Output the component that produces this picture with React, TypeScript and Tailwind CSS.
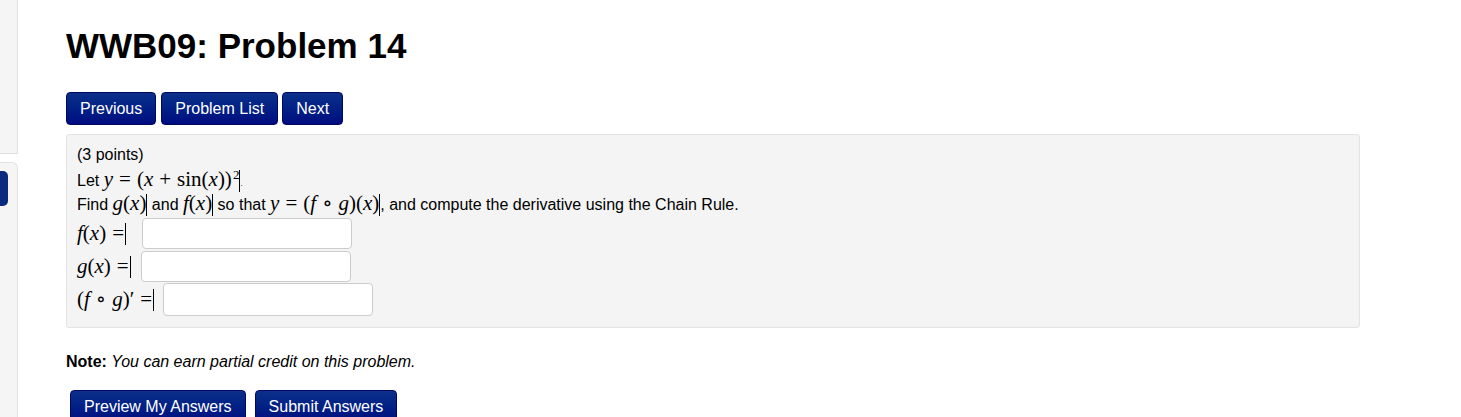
import React from "react";

const serif = { fontFamily: '"Liberation Serif", "DejaVu Serif", serif' };

function I({ children }: { children: React.ReactNode }) {
  return <span className="italic">{children}</span>;
}

function Op({ children }: { children: React.ReactNode }) {
  return <span className="mx-[6px]">{children}</span>;
}

function Eq() {
  return <span className="ml-[6px] mr-[1px]">=</span>;
}

function M({ children }: { children: React.ReactNode }) {
  return (
    <span className="text-[21px] leading-none whitespace-nowrap" style={serif}>
      {children}
    </span>
  );
}

function Bar() {
  return <span className="inline-block w-px h-[22px] bg-black align-[-6px]" />;
}

function NavBtn({ children }: { children: React.ReactNode }) {
  return (
    <button className="h-[33px] px-[13px] rounded-[4px] bg-gradient-to-b from-[#0c2f8a] to-[#000a80] text-white text-[16px] leading-none border border-[#00085e]">
      {children}
    </button>
  );
}

export default function App() {
  return (
    <div
      className="relative w-full h-[417px] bg-white overflow-hidden flex text-black"
      style={{ fontFamily: '"Liberation Sans", Arial, sans-serif' }}
    >
      <div className="w-[18px] shrink-0 flex flex-col">
        <div className="h-[154px] bg-[#f5f5f5] border-r border-b border-[#e0e0e0]" />
        <div className="mt-[8px] flex-1 bg-[#f5f5f5] border-r border-t border-[#e3e3e3] rounded-tr-[6px] pt-[8px]">
          <div className="w-[8px] h-[35px] bg-[#0a2a80] rounded-r-[5px]" />
        </div>
      </div>

      <div className="ml-[48px] w-[1294px] shrink-0">
        <h1 className="mt-[27px] text-[35px] leading-[38px] font-bold">WWB09: Problem 14</h1>

        <div className="mt-[27px] flex">
          <NavBtn>Previous</NavBtn>
          <div className="w-[5px]" />
          <NavBtn>Problem List</NavBtn>
          <div className="w-[4px]" />
          <NavBtn>Next</NavBtn>
        </div>

        <div className="mt-[9px] h-[194px] bg-[#f4f4f4] border border-[#e3e3e3] rounded-[3px] px-[10px] pt-[8px] text-[16px] leading-[24px]">
          <div className="h-[24px]">(3 points)</div>
          <div className="h-[24px] mt-[1px]">
            Let{" "}
            <M>
              <I>y</I>
              <Op>=</Op>(<I>x</I>
              <Op>+</Op>sin(<I>x</I>))
              <span className="inline-block text-[13px] leading-none align-[7px] ml-[1px]">2</span>
            </M>
            <Bar />
            <span className="text-[8px]">.</span>
          </div>
          <div className="h-[24px] mt-[1px]">
            Find{" "}
            <M>
              <I>g</I>(<I>x</I>)
            </M>
            <Bar /> and{" "}
            <M>
              <I>f</I>(<I>x</I>)
            </M>
            <Bar /> so that{" "}
            <M>
              <I>y</I>
              <Op>=</Op>(<I>f</I>
              <Op>∘</Op>
              <I>g</I>)(<I>x</I>)
            </M>
            <Bar />, and compute the derivative using the Chain Rule.
          </div>

          <div className="flex flex-col">
            <div className="flex items-center h-[33px]">
              <M>
                <I>f</I>(<I>x</I>)<Eq />
              </M>
              <Bar />
              <input className="ml-[16px] w-[210px] h-[31px] bg-white border border-[#cccccc] rounded-[4px]" />
            </div>
            <div className="flex items-center h-[33px]">
              <M>
                <I>g</I>(<I>x</I>)<Eq />
              </M>
              <Bar />
              <input className="ml-[10px] w-[210px] h-[31px] bg-white border border-[#cccccc] rounded-[4px]" />
            </div>
            <div className="flex items-center h-[33px]">
              <M>
                (<I>f</I>
                <Op>∘</Op>
                <I>g</I>)′<Eq />
              </M>
              <Bar />
              <input className="ml-[9px] w-[210px] h-[33px] bg-white border border-[#cccccc] rounded-[4px]" />
            </div>
          </div>
        </div>

        <div className="mt-[25px] text-[16px] leading-[18px]">
          <span className="font-bold">Note:</span> <span className="italic">You can earn partial credit on this problem.</span>
        </div>

        <div className="mt-[19px] ml-[4px] flex gap-[9px]">
          <NavBtn>Preview My Answers</NavBtn>
          <NavBtn>Submit Answers</NavBtn>
        </div>
      </div>
    </div>
  );
}
